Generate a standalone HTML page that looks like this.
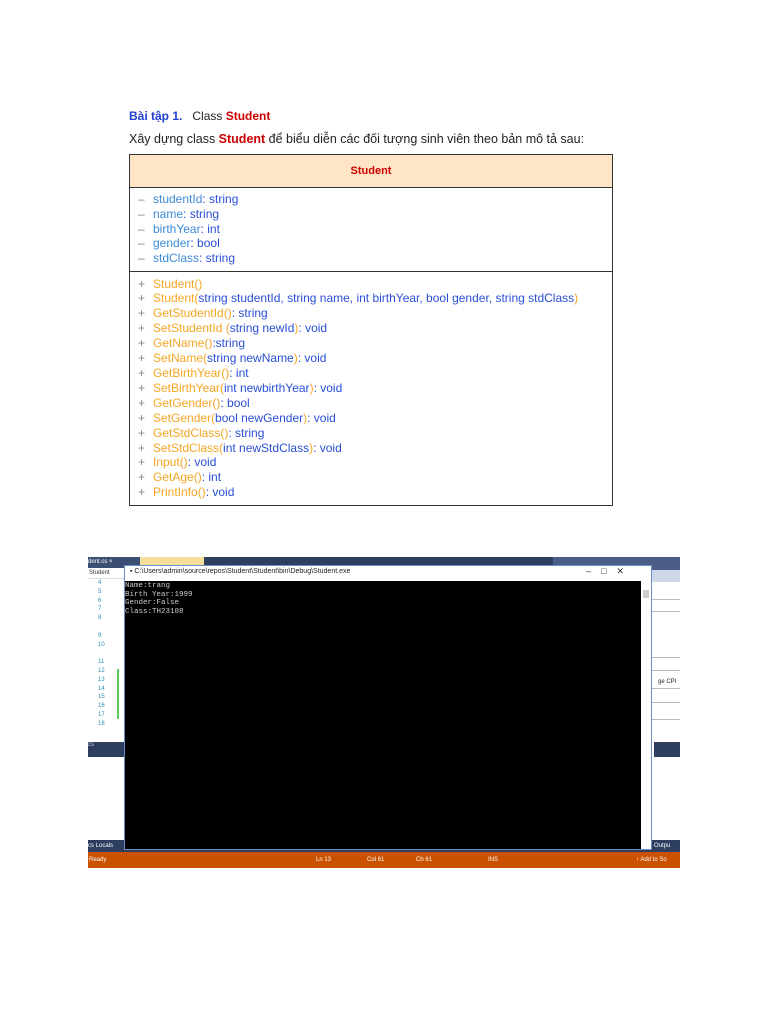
<!DOCTYPE html>
<html><head><meta charset="utf-8"><style>
body{margin:0;width:768px;height:1024px;background:#fff;position:relative;overflow:hidden;font-family:"Liberation Sans","Noto Sans CJK SC",sans-serif}
.a{position:absolute}
.t{font-size:12px;color:#222;white-space:nowrap}
.o{color:#f5a623}.b{color:#2a4fd6}.c{color:#3c8bd8}
.row{position:absolute;left:138px;font-size:12px;white-space:nowrap;line-height:15px}
.row i{font-style:normal;color:#888;display:inline-block;width:15px}
.mono{font-family:"Liberation Mono",monospace;font-size:7.5px;color:#ccc;line-height:8.6px}
</style></head><body>
<div class="a t" style="left:129px;top:109px;font-size:12px"><b style="color:#2040d0">Bài tập 1.</b>&nbsp;&nbsp; Class <b style="color:#c00">Student</b></div>
<div class="a t" style="left:129px;top:132px;font-size:12.5px">Xây dựng class <b style="color:#c00">Student</b> để biểu diễn các đối tượng sinh viên theo bản mô tả sau:</div>
<div class="a" style="left:129px;top:154px;width:484px;height:352px;border:1px solid #333;box-sizing:border-box"></div>
<div class="a" style="left:130px;top:155px;width:482px;height:32px;background:#fde5c5;border-bottom:1px solid #333;text-align:center;line-height:32px;font-size:11px;font-weight:bold;color:#c00">Student</div>
<div class="a" style="left:130px;top:271px;width:482px;height:1px;background:#333"></div>
<div class="row" style="top:192px"><i>–</i><span class="c">studentId</span><span class="b">: string</span></div>
<div class="row" style="top:207px"><i>–</i><span class="c">name</span><span class="b">: string</span></div>
<div class="row" style="top:222px"><i>–</i><span class="c">birthYear</span><span class="b">: int</span></div>
<div class="row" style="top:236px"><i>–</i><span class="c">gender</span><span class="b">: bool</span></div>
<div class="row" style="top:251px"><i>–</i><span class="c">stdClass</span><span class="b">: string</span></div>
<div class="row" style="top:277px"><i>+</i><span class="o">Student()</span></div>
<div class="row" style="top:291px"><i>+</i><span class="o">Student(</span><span class="b">string studentId, string name, int birthYear, bool gender, string stdClass</span><span class="o">)</span></div>
<div class="row" style="top:306px"><i>+</i><span class="o">GetStudentId()</span><span class="b">: string</span></div>
<div class="row" style="top:321px"><i>+</i><span class="o">SetStudentId (</span><span class="b">string newId</span><span class="o">)</span><span class="b">: void</span></div>
<div class="row" style="top:336px"><i>+</i><span class="o">GetName()</span><span class="b">:string</span></div>
<div class="row" style="top:351px"><i>+</i><span class="o">SetName(</span><span class="b">string newName</span><span class="o">)</span><span class="b">: void</span></div>
<div class="row" style="top:366px"><i>+</i><span class="o">GetBirthYear()</span><span class="b">: int</span></div>
<div class="row" style="top:381px"><i>+</i><span class="o">SetBirthYear(</span><span class="b">int newbirthYear</span><span class="o">)</span><span class="b">: void</span></div>
<div class="row" style="top:396px"><i>+</i><span class="o">GetGender()</span><span class="b">: bool</span></div>
<div class="row" style="top:411px"><i>+</i><span class="o">SetGender(</span><span class="b">bool newGender</span><span class="o">)</span><span class="b">: void</span></div>
<div class="row" style="top:426px"><i>+</i><span class="o">GetStdClass()</span><span class="b">: string</span></div>
<div class="row" style="top:441px"><i>+</i><span class="o">SetStdClass(</span><span class="b">int newStdClass</span><span class="o">)</span><span class="b">: void</span></div>
<div class="row" style="top:455px"><i>+</i><span class="o">Input()</span><span class="b">: void</span></div>
<div class="row" style="top:470px"><i>+</i><span class="o">GetAge()</span><span class="b">: int</span></div>
<div class="row" style="top:485px"><i>+</i><span class="o">PrintInfo()</span><span class="b">: void</span></div>

<!-- screenshot -->
<div class="a" style="left:88px;top:557px;width:592px;height:311px;background:#fff;overflow:hidden">
 <div class="a" style="left:0;top:0;width:592px;height:11px;background:#2d3e5e"></div>
 <div class="a" style="left:0;top:0;width:52px;height:11px;background:#3b4f75;color:#fff;font-size:6px;line-height:11px">dent.cs ×</div>
 <div class="a" style="left:52px;top:0;width:64px;height:8px;background:#f5dd9a"></div>
 <div class="a" style="left:465px;top:0;width:127px;height:13px;background:#4a5e85"></div>
 <div class="a" style="left:560px;top:13px;width:32px;height:12px;background:#cfd8ea"></div>
 <div class="a" style="left:564px;top:42px;width:28px;height:1px;background:#bbb"></div>
 <div class="a" style="left:564px;top:54px;width:28px;height:1px;background:#bbb"></div>
 <div class="a" style="left:564px;top:100px;width:28px;height:1px;background:#bbb"></div>
 <div class="a" style="left:564px;top:113px;width:28px;height:1px;background:#bbb"></div>
 <div class="a" style="left:564px;top:131px;width:28px;height:1px;background:#bbb"></div>
 <div class="a" style="left:564px;top:145px;width:28px;height:1px;background:#bbb"></div>
 <div class="a" style="left:564px;top:162px;width:28px;height:1px;background:#bbb"></div>
 <div class="a" style="left:0;top:11px;width:36px;height:170px;background:#fff;font-size:6px;color:#333">
  <div style="padding:2px 0 2px 1px;border-bottom:1px solid #ddd">Student</div>
  <div style="color:#2b91af;font-size:6px;line-height:8.8px;padding-left:10px">4<br>5<br>6<br>7<br>8<br><br>9<br>10<br><br>11<br>12<br>13<br>14<br>15<br>16<br>17<br>18</div>
 </div>
 <div class="a" style="left:29px;top:112px;width:2px;height:50px;background:#5ac85a"></div>
 <div class="a" style="left:0;top:185px;width:36px;height:15px;background:#2d3e5e;color:#ccd;font-size:6px">cs</div>
 <div class="a" style="left:0;top:283px;width:36px;height:12px;background:#2d3e5e;color:#fff;font-size:6px;line-height:12px">cs Locals</div>
 <div class="a" style="left:36px;top:283px;width:530px;height:12px;background:#2d3e5e"></div>
 <div class="a" style="left:310px;top:288px;width:30px;height:3px;background:#ddd"></div>
 <div class="a" style="left:566px;top:185px;width:26px;height:15px;background:#2d3e5e"></div>
 <div class="a" style="left:566px;top:283px;width:26px;height:12px;background:#2d3e5e;color:#fff;font-size:6px;line-height:12px">Outpu</div>
 <div class="a" style="left:570px;top:122px;font-size:6px;color:#222">ge CPI</div>
 <div class="a" style="left:0;top:295px;width:592px;height:16px;background:#ca5100;color:#fff;font-size:6px;line-height:16px">
  <span class="a" style="left:1px">Ready</span><span class="a" style="left:228px">Ln 13</span><span class="a" style="left:279px">Col 61</span><span class="a" style="left:328px">Ch 61</span><span class="a" style="left:400px">INS</span><span class="a" style="left:548px">↑ Add to So</span></div>
 <!-- console -->
 <div class="a" style="left:36px;top:8px;width:528px;height:285px;background:#fff;border:1px solid #6a8fc0;box-sizing:border-box"></div>
 <div class="a" style="left:42px;top:11px;font-size:7px;color:#222">▪ C:\Users\admin\source\repos\Student\Student\bin\Debug\Student.exe</div>
 <div class="a" style="left:498px;top:9px;font-size:9px;color:#333">–&nbsp;&nbsp;&nbsp;&nbsp;□&nbsp;&nbsp;&nbsp;&nbsp;✕</div>
 <div class="a" style="left:37px;top:24px;width:516px;height:268px;background:#000"></div>
 <div class="a mono" style="left:37px;top:25px">Name:trang<br>Birth Year:1999<br>Gender:False<br>Class:TH23108</div>
 <div class="a" style="left:555px;top:33px;width:6px;height:8px;background:#ccc"></div>
</div>
</body></html>
